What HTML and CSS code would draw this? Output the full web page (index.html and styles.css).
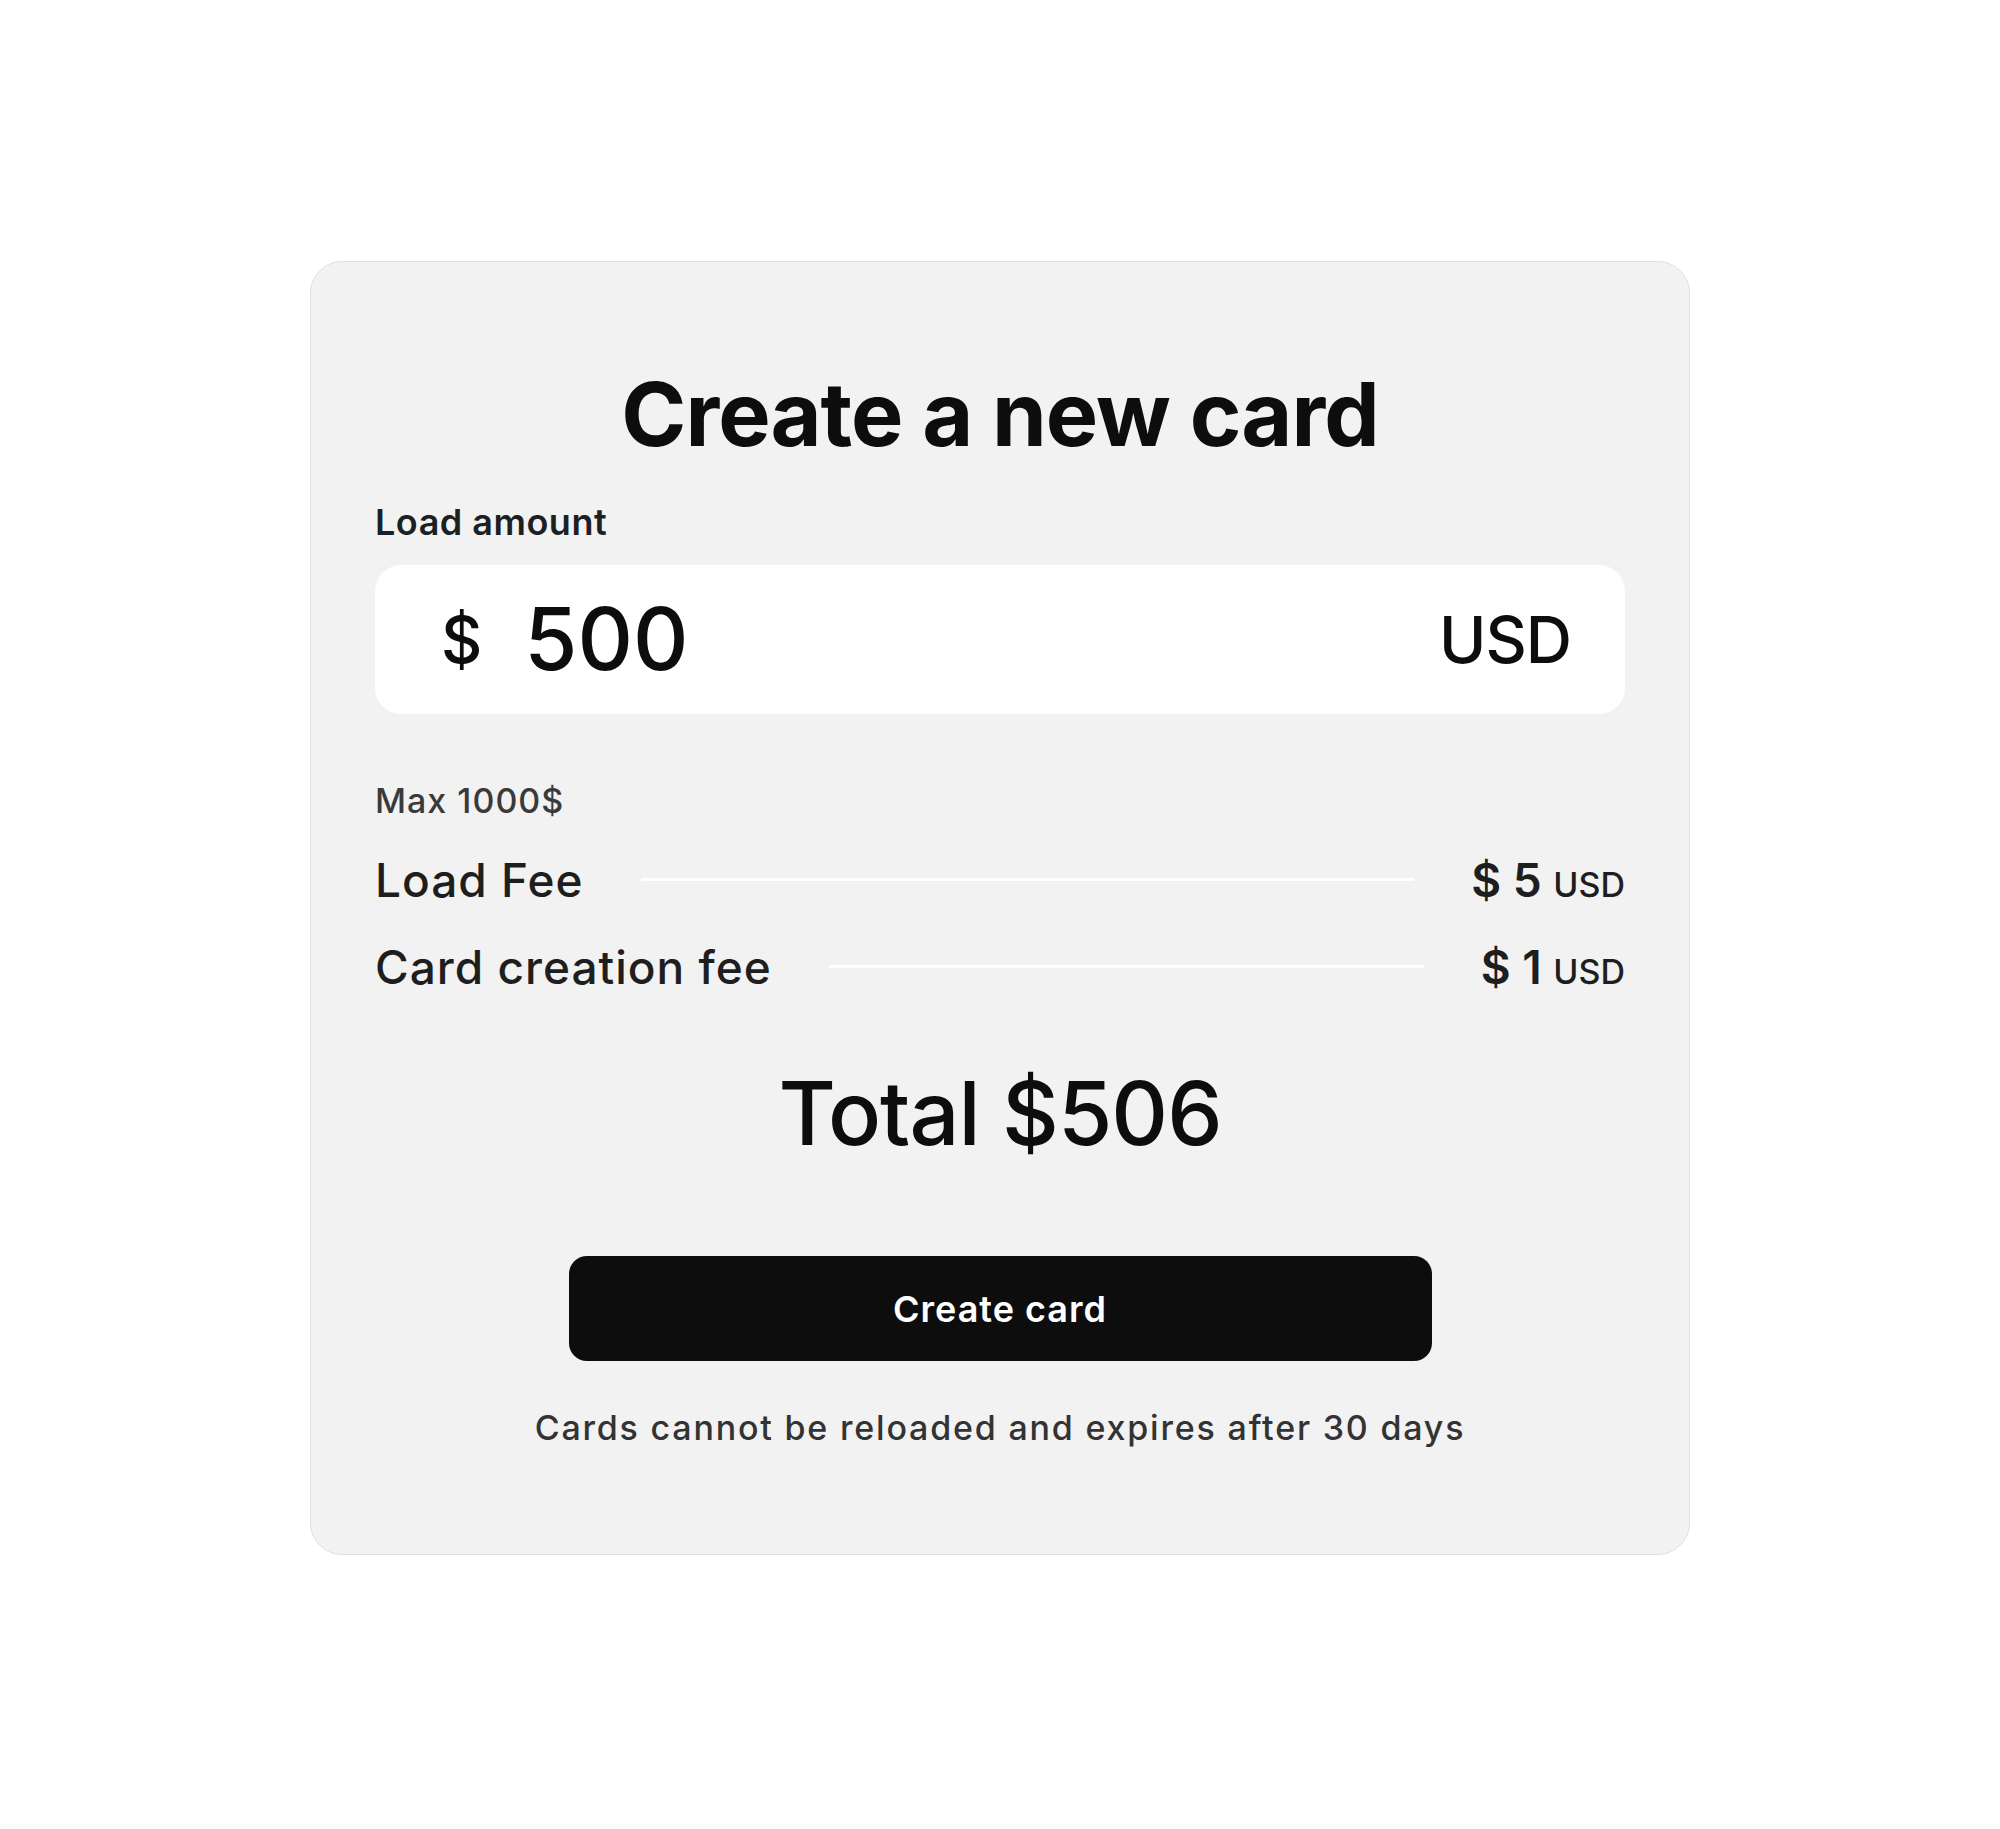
FILE: index.html
```html
<!DOCTYPE html>
<html lang="en">
<head>
  <meta charset="UTF-8" />
  <meta name="viewport" content="width=device-width, initial-scale=1" />
  <title>Create a new card</title>
  <link rel="stylesheet" href="styles.css">
</head>
<body>
  <div class="card">
    <h1>Create a new card</h1>

    <label class="field-label" for="loadAmount">Load amount</label>
    <div class="amount-box">
      <span class="currency-sign">$</span>
      <input type="text" id="loadAmount" value="500" />
      <span class="currency-code">USD</span>
    </div>

    <div class="hint">Max 1000$</div>

    <div class="fee-row">
      <span class="fee-name">Load Fee</span>
      <span class="fee-line"></span>
      <span class="fee-value">$ 5 <small>USD</small></span>
    </div>
    <div class="fee-row">
      <span class="fee-name">Card creation fee</span>
      <span class="fee-line"></span>
      <span class="fee-value">$ 1 <small>USD</small></span>
    </div>

    <div class="total">Total $506</div>

    <button class="create-btn">Create card</button>

    <p class="note">Cards cannot be reloaded and expires after 30 days</p>
  </div>
</body>
</html>
```

FILE: styles.css
```css
html, body {
  margin: 0;
  background: #ffffff;
  font-family: Inter, 'Noto Sans', sans-serif;
  color: #0d0d0d;
}

.card {
  box-sizing: border-box;
  width: 1380px;
  height: 1294px;
  margin: 261px auto 0;
  padding: 100px 64px 0;
  background: #f2f2f2;
  border: 1.5px solid #dedfe5;
  border-radius: 32px;
  display: flex;
  flex-direction: column;
}

h1 {
  margin: 0;
  text-align: center;
  font-size: 88px;
  line-height: 1.2;
  font-weight: 700;
  letter-spacing: -1px;
}

.field-label {
  margin-top: 33px;
  font-size: 36px;
  line-height: 1.2;
  font-weight: 600;
  color: #1c1f24;
  letter-spacing: 0.5px;
}

.amount-box {
  margin-top: 21px;
  height: 149px;
  background: #ffffff;
  border-radius: 26px;
  display: flex;
  align-items: center;
  padding: 0 54px 0 66px;
}

.currency-sign {
  font-size: 64px;
  font-weight: 500;
  margin-right: 42px;
}

.amount-box input {
  flex: 1;
  min-width: 0;
  border: none;
  outline: none;
  background: transparent;
  font-family: inherit;
  font-size: 86px;
  font-weight: 500;
  color: #0d0d0d;
  padding: 0;
}

.currency-code {
  font-size: 64px;
  font-weight: 500;
  letter-spacing: -1px;
}

.hint {
  margin-top: 67px;
  font-size: 34px;
  line-height: 1.2;
  font-weight: 500;
  color: #3a3a3a;
  letter-spacing: 1px;
}

.fee-row {
  display: flex;
  align-items: center;
  height: 56px;
  margin-top: 30px;
}

.fee-row + .fee-row {
  margin-top: 31px;
}

.fee-name {
  font-size: 46px;
  font-weight: 500;
  color: #1e1e1e;
  letter-spacing: 1px;
}

.fee-line {
  flex: 1;
  height: 3px;
  background: #ffffff;
  margin: 0 57px;
}

.fee-value {
  font-size: 46px;
  font-weight: 600;
  color: #1e1e1e;
}

.fee-value small {
  font-size: 34px;
  font-weight: 500;
}

.total {
  margin-top: 66px;
  text-align: center;
  font-size: 88px;
  line-height: 1.2;
  font-weight: 500;
  letter-spacing: -1px;
}

.create-btn {
  align-self: center;
  margin-top: 90px;
  width: 863px;
  height: 105px;
  border: none;
  border-radius: 18px;
  background: #0d0d0d;
  color: #ffffff;
  font-family: inherit;
  font-size: 36px;
  font-weight: 600;
  letter-spacing: 1px;
  cursor: pointer;
}

.note {
  margin: 47px 0 0;
  text-align: center;
  font-size: 34px;
  line-height: 1.2;
  font-weight: 500;
  color: #333333;
  letter-spacing: 1.8px;
}
```
